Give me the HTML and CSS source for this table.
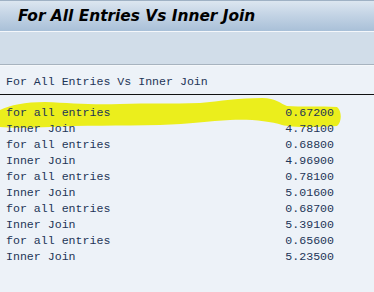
FILE: index.html
```html
<!DOCTYPE html>
<html>
<head>
<meta charset="utf-8">
<link rel="stylesheet" href="styles.css">
</head>
<body>
<div class="titlebar"><span class="title">For All Entries Vs Inner Join</span></div>
<div class="toolbar"></div>
<div class="content">
  <div class="list-head">For All Entries Vs Inner Join</div>
  <div class="rule"></div>
  <div class="rows">
    <svg class="marker" width="345" height="32" viewBox="0 0 345 32">
      <path d="M0 11 C10 6 25 3 45 3 C70 4 90 6 120 5 C150 4 170 5 200 4 C220 2 240 -1 262 -1 C276 -1 281 5 287 7 C300 8 320 7 337 8 C342 12 342 23 337 27 C310 29 290 28 282 26 C270 22 250 20 230 21 C210 22 190 25 160 26 C120 27 80 26 50 28 C30 29 10 29 0 28 Z" />
    </svg>
    <div class="row"><span>for all entries</span><span>0.67200</span></div>
    <div class="row"><span>Inner Join</span><span>4.78100</span></div>
    <div class="row"><span>for all entries</span><span>0.68800</span></div>
    <div class="row"><span>Inner Join</span><span>4.96900</span></div>
    <div class="row"><span>for all entries</span><span>0.78100</span></div>
    <div class="row"><span>Inner Join</span><span>5.01600</span></div>
    <div class="row"><span>for all entries</span><span>0.68700</span></div>
    <div class="row"><span>Inner Join</span><span>5.39100</span></div>
    <div class="row"><span>for all entries</span><span>0.65600</span></div>
    <div class="row"><span>Inner Join</span><span>5.23500</span></div>
  </div>
</div>
</body>
</html>
```
FILE: styles.css
```css
html, body {
  margin: 0;
  padding: 0;
  background: #edf2f8;
  height: 100%;
  overflow: hidden;
}
.titlebar {
  height: 30px;
  border-top: 1px solid #9fb1c4;
  background: linear-gradient(#dce6f0, #c4d4e5 45%, #a9c0d8);
  display: flex;
  align-items: center;
  padding-left: 18px;
  border-bottom: 1px solid #f4f7fb;
}
.title {
  font-family: "DejaVu Sans", sans-serif;
  font-weight: bold;
  font-style: italic;
  font-size: 15.4px;
  color: #000;
}
.toolbar {
  height: 32px;
  background: #d1dde9;
  border-bottom: 1px solid #a7b3bf;
}
.content {
  font-family: "Liberation Mono", monospace;
  font-size: 11.6px;
  color: #1d3557;
  padding-top: 8px;
  border-top: 1px solid #f5f8fb;
}
.list-head {
  padding-left: 6px;
  line-height: 16px;
}
.rule {
  height: 1px;
  background: #111;
  margin-top: 4px;
}
.rows {
  position: relative;
  padding-top: 10px;
}
.marker {
  position: absolute;
  left: 0;
  top: 4px;
  overflow: visible;
}
.marker path {
  fill: #ebee1c;
}
.row {
  position: relative;
  display: flex;
  justify-content: space-between;
  width: 328px;
  padding-left: 6px;
  line-height: 16px;
}
```
